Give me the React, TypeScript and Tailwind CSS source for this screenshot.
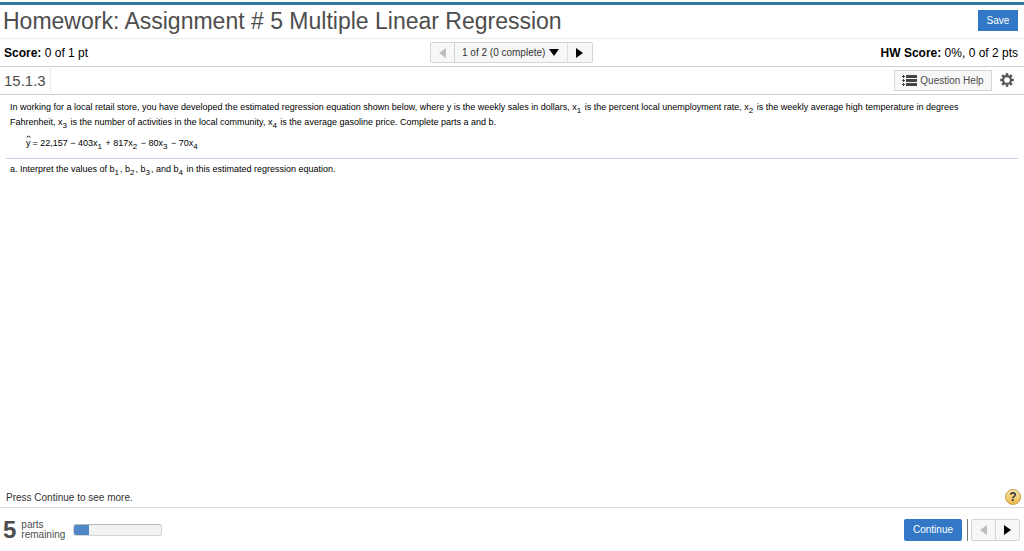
import { useState } from "react";
import type { ReactNode } from "react";

function Arrow({ dir }: { dir: "left" | "right" | "down" }) {
    const points = {
        left: "7,0 7,10 0,5",
        right: "0,0 7,5 0,10",
        down: "0,0 10,0 5,7",
    };
    return (
        <svg
            width={dir === "down" ? 10 : 7}
            height={dir === "down" ? 7 : 10}
            viewBox={dir === "down" ? "0 0 10 7" : "0 0 7 10"}
            fill="currentColor"
            aria-hidden="true"
        >
            <polygon points={points[dir]} />
        </svg>
    );
}

function ListIcon() {
    return (
        <svg width="15" height="11" viewBox="0 0 15 11" fill="#444" aria-hidden="true">
            <path d="M1 0h1v1h1v1H2v1H1V2H0V1h1zM1 4h1v1h1v1H2v1H1V6H0V5h1zM1 8h1v1h1v1H2v1H1v-1H0V9h1zM4 0h11v3H4zM4 4h11v3H4zM4 8h11v3H4z" />
        </svg>
    );
}

function GearIcon() {
    return (
        <svg width="14" height="14" viewBox="0 0 14 14" fill="none" stroke="#555" aria-hidden="true">
            <circle cx="7" cy="7" r="3.9" strokeWidth="2.1" />
            <path
                strokeWidth="2.6"
                d="M7 .2v2.4M7 11.4v2.4M.2 7h2.4M11.4 7h2.4M2.2 2.2l1.7 1.7M10.1 10.1l1.7 1.7M2.2 11.8l1.7-1.7M10.1 3.9l1.7-1.7"
            />
        </svg>
    );
}

function Sub({ children }: { children: ReactNode }) {
    return <sub className="static mr-px align-sub text-[8px] leading-none">{children}</sub>;
}

function YHat() {
    return (
        <span className="relative mr-[2px] inline-block">
            y
            <svg
                className="absolute -top-px left-0"
                width="5"
                height="3"
                viewBox="0 0 5 3"
                fill="none"
                stroke="currentColor"
                aria-hidden="true"
            >
                <path d="M.8 2.5l1.7-1.7 1.7 1.7" />
            </svg>
        </span>
    );
}

function ProgressBar({ done, total }: { done: number; total: number }) {
    return (
        <div
            role="progressbar"
            aria-label="Parts completed"
            aria-valuenow={done}
            aria-valuemax={total}
            className="h-3 w-[89px] overflow-hidden rounded-[3px] border border-t-[#b5b5b5] border-[#d5d5d5] bg-[#f3f3f3]"
        >
            <div className="h-full bg-[#5088c7]" style={{ width: `${(done / total) * 100}%` }} />
        </div>
    );
}

export default function App() {
    const [question, setQuestion] = useState("1");

    return (
        <div className="flex min-h-screen flex-col bg-white pt-[2px] font-['Liberation_Sans',Arial,sans-serif] text-black">
            <header className="flex items-center justify-between border-t-3 border-b border-t-[#31789b] border-b-[#ebebeb] pr-[6px] pl-[3px]">
                <h1 className="text-[23px] leading-[33px] text-[#4d4d4d]">
                    Homework: Assignment # 5 Multiple Linear Regression
                </h1>
                <button className="mb-[2px] h-[21px] w-10 bg-[#3278c7] text-[10px] text-white">Save</button>
            </header>

            <div className="grid h-7 grid-cols-[1fr_auto_1fr] items-center border-b border-[#c9d0d8] pr-[6px] pl-1 text-xs">
                <p><b>Score:</b> 0 of 1 pt</p>
                <nav className="flex h-[21px] rounded-[2px] border border-[#d5d5d5] bg-[#f7f7f7]" aria-label="Questions">
                    <button
                        className="flex w-6 items-center justify-center border-r border-[#d0d0d0] text-[#bdbdbd]"
                        aria-label="Previous question"
                        disabled
                    >
                        <Arrow dir="left" />
                    </button>
                    <label className="flex w-[113px] items-center justify-center gap-[3px] border-r border-[#e0e0e0]">
                        <select
                            className="appearance-none text-[10px] text-[#333]"
                            aria-label="Question"
                            value={question}
                            onChange={(e) => setQuestion(e.target.value)}
                        >
                            <option value="1">1 of 2 (0 complete)</option>
                            <option value="2">2 of 2 (0 complete)</option>
                        </select>
                        <Arrow dir="down" />
                    </label>
                    <button className="flex w-6 items-center justify-center" aria-label="Next question">
                        <Arrow dir="right" />
                    </button>
                </nav>
                <p className="text-right"><b>HW Score:</b> 0%, 0 of 2 pts</p>
            </div>

            <div className="flex h-7 items-center justify-between border-b border-[#c9d0d8] pr-[10px] pl-1">
                <h2 className="border-r border-[#ebebeb] pr-1 text-[15px] leading-[25px] text-[#4d4d4d]">15.1.3</h2>
                <div className="flex items-center gap-2">
                    <button className="flex h-[21px] w-[98px] items-center justify-center gap-[3px] border border-[#d5d5d5] bg-[#f7f7f7] text-[10px] text-[#4d4d4d]">
                        <ListIcon />
                        Question Help
                    </button>
                    <button className="pb-[2px]" aria-label="Settings">
                        <GearIcon />
                    </button>
                </div>
            </div>

            <main className="grow px-[6px] text-[9px] leading-[15px]">
                <div className="border-b border-[#cdcde0] pt-[5px] pb-[7px] pl-1">
                    <p className="pr-7">
                        In working for a local retail store, you have developed the estimated regression equation shown
                        below, where y is the weekly sales in dollars, x<Sub>1</Sub> is the percent local unemployment
                        rate, x<Sub>2</Sub> is the weekly average high temperature in degrees Fahrenheit, x<Sub>3</Sub> is
                        the number of activities in the local community, x<Sub>4</Sub> is the average gasoline price.
                        Complete parts a and b.
                    </p>
                    <p className="mt-[6px] pl-4">
                        <YHat />= 22,157 − 403x<Sub>1</Sub> + 817x<Sub>2</Sub> − 80x<Sub>3</Sub> − 70x<Sub>4</Sub>
                    </p>
                </div>
                <p className="px-1 pt-[3px]">
                    a. Interpret the values of b<Sub>1</Sub>, b<Sub>2</Sub>, b<Sub>3</Sub>, and b<Sub>4</Sub> in this
                    estimated regression equation.
                </p>
            </main>

            <div className="flex h-[21px] items-center justify-between border-b border-[#d9d9df] pr-[3px] pl-[6px]">
                <p className="text-[10px] text-[#333]">Press Continue to see more.</p>
                <button
                    className="size-4 rounded-full border border-[#c29b45] bg-linear-to-b from-[#fbe9a9] to-[#efb847] text-xs leading-none font-bold text-[#333]"
                    aria-label="Help"
                >
                    ?
                </button>
            </div>

            <footer className="flex h-[43px] items-center justify-between pr-1 pl-[3px] text-[#4d4d4d]">
                <div className="flex items-center">
                    <b className="text-[24px] leading-none">5</b>
                    <p className="mr-2 ml-[5px] text-[10px] leading-[10px]">
                        parts
                        <br />
                        remaining
                    </p>
                    <ProgressBar done={1} total={6} />
                </div>
                <div className="flex items-center">
                    <button className="h-[22px] w-[58px] rounded-[2px] bg-[#3278c7] text-[10px] text-white">Continue</button>
                    <div className="ml-[5px] flex h-[22px] border-l border-[#777] pl-[3px]">
                        <div className="flex rounded-[2px] border border-[#d5d5d5] bg-[#f7f7f7] text-black">
                            <button
                                className="flex w-6 items-center justify-center border-r border-[#d5d5d5] text-[#bdbdbd]"
                                aria-label="Previous part"
                                disabled
                            >
                                <Arrow dir="left" />
                            </button>
                            <button className="flex w-[23px] items-center justify-center" aria-label="Next part">
                                <Arrow dir="right" />
                            </button>
                        </div>
                    </div>
                </div>
            </footer>
        </div>
    );
}
